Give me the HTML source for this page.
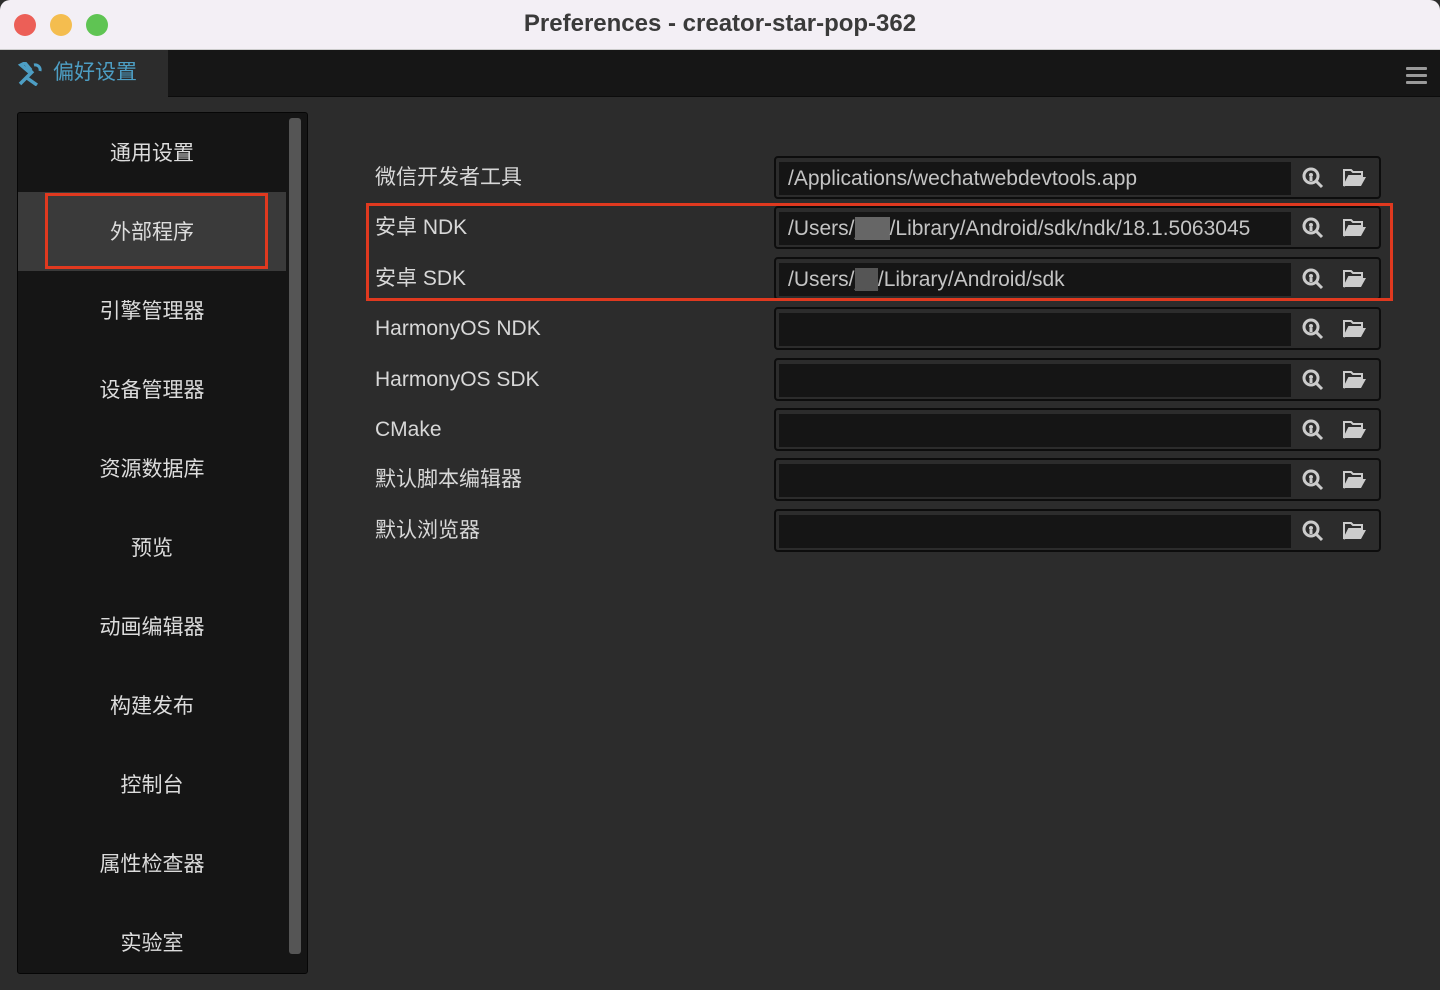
<!DOCTYPE html><html><head><meta charset="utf-8"><style>
*{margin:0;padding:0;box-sizing:border-box}
body{width:1440px;height:990px;background:#2c2c2c;font-family:"Liberation Sans","Noto Sans CJK SC",sans-serif;position:relative;overflow:hidden}
.title{position:absolute;left:0;top:0;width:1440px;height:50px;background:#f3eff5;border-radius:10px 10px 0 0;text-align:center;line-height:48px;font-size:24px;font-weight:bold;color:#3a3a3a;border-bottom:1px solid #ccc}
.dot{position:absolute;top:14px;width:22px;height:22px;border-radius:50%}
.tabbar{position:absolute;top:50px;left:0;width:1440px;height:47px;background:#161616;border-bottom:1px solid #0c0c0c}
.tab{position:absolute;left:0;top:0;width:168px;height:48px;background:#2c2c2c;color:#4d9ec4;font-size:21px;line-height:46px;padding-left:53px}
.side{position:absolute;left:17px;top:112px;width:291px;height:862px;background:#151515;border:1px solid #060606;border-radius:3px}
.item{position:absolute;left:0;width:268px;height:79px;text-align:center;line-height:79px;color:#dcdcdc;font-size:21px}
.sb{position:absolute;left:271px;top:5px;width:12px;height:836px;background:#555;border-radius:3px}
.lab{position:absolute;left:375px;color:#d8d8d8;font-size:21px;line-height:28px;height:28px}
.box{position:absolute;left:774px;width:607px;height:43px;background:#2c2c2c;border:2px solid #0d0d0d;border-radius:4px}
.fld{position:absolute;left:3px;top:4px;width:512px;height:33px;background:#151515;color:#c4c4c4;font-size:21px;line-height:33px;padding-left:9px;white-space:nowrap}
.ic{position:absolute;top:8px}
.red{position:absolute;border:3px solid #e0391f}
</style></head><body>
<div class="title"><div class="dot" style="left:14px;background:#ec5f57"></div><div class="dot" style="left:50px;background:#f4bd4f"></div><div class="dot" style="left:86px;background:#5fc453"></div>Preferences - creator-star-pop-362</div>
<div class="tabbar"><div class="tab"><svg style="position:absolute;left:17px;top:12px" width="26" height="24" viewBox="0 0 26 24"><path d="M3 22L16 9M10 16l10 7M4 3l7 6 2-2-5-6z" stroke="#4d9ec4" stroke-width="3.5" fill="none"/><path d="M17 3a5 5 0 0 1 6 6" stroke="#4d9ec4" stroke-width="3" fill="none"/></svg>偏好设置</div>
<div style="position:absolute;right:13px;top:17px;width:21px"><div style="height:3px;background:#9a9a9a;margin-bottom:4px;border-radius:1px"></div><div style="height:3px;background:#9a9a9a;margin-bottom:4px;border-radius:1px"></div><div style="height:3px;background:#9a9a9a;border-radius:1px"></div></div></div>
<div class="side">
<div class="item" style="top:1px">通用设置</div>
<div class="item" style="top:79px;background:#3a3a3a;line-height:81px">外部程序</div>
<div class="item" style="top:159px">引擎管理器</div>
<div class="item" style="top:238px">设备管理器</div>
<div class="item" style="top:317px">资源数据库</div>
<div class="item" style="top:396px">预览</div>
<div class="item" style="top:475px">动画编辑器</div>
<div class="item" style="top:554px">构建发布</div>
<div class="item" style="top:633px">控制台</div>
<div class="item" style="top:712px">属性检查器</div>
<div class="item" style="top:791px">实验室</div>
<div class="sb"></div></div>
<div class="red" style="left:45px;top:193px;width:223px;height:76px"></div>
<div id="rows"></div>
<div class="red" style="left:366px;top:203px;width:1027px;height:98px"></div>
<script>
var L=["微信开发者工具","安卓 NDK","安卓 SDK","HarmonyOS NDK","HarmonyOS SDK","CMake","默认脚本编辑器","默认浏览器"];
var V=["/Applications/wechatwebdevtools.app","/Users/<span style='background:#666;color:#666'>___</span>/Library/Android/sdk/ndk/18.1.5063045","/Users/<span style='background:#555;color:#555'>__</span>/Library/Android/sdk","","","","",""];
var h="";
var zoom='<svg class="ic" style="left:525px" width="24" height="24" viewBox="0 0 24 24"><circle cx="10" cy="10" r="7" stroke="#ccc" stroke-width="3" fill="none"/><circle cx="10" cy="9" r="2" fill="#ccc"/><path d="M10 11v4M15 15l6 6" stroke="#ccc" stroke-width="3"/></svg>';
var fold='<svg class="ic" style="left:566px" width="25" height="24" viewBox="0 0 25 24"><path d="M2 4h7l2 2h9v4H7l-5 10z" stroke="#ccc" stroke-width="2" fill="none"/><path d="M7 11h17l-5 9H2z" fill="#ccc"/></svg>';
for(var i=0;i<8;i++){var c=178+i*50.4;h+='<div class="lab" style="top:'+(c-14)+'px">'+L[i]+'</div><div class="box" style="top:'+(c-22)+'px"><div class="fld">'+V[i]+'</div>'+zoom+fold+'</div>';}
document.getElementById("rows").innerHTML=h;
</script>
</body></html>
